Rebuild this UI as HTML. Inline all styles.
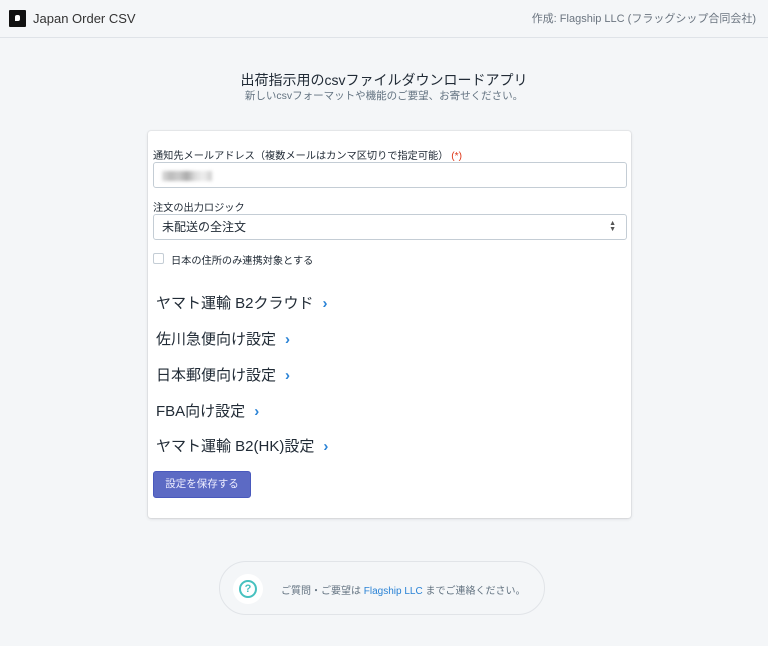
<!DOCTYPE html>
<html><head><meta charset="utf-8"><style>
*{box-sizing:border-box;margin:0;padding:0}
body{width:768px;height:646px;background:#f4f6f8;font-family:"Liberation Sans","Noto Sans CJK JP",sans-serif;color:#212b36;position:relative;overflow:hidden}
.top{position:absolute;left:0;top:0;width:768px;height:38px;border-bottom:1px solid #dfe3e8;background:#f4f6f8}
.logo{position:absolute;left:9px;top:10px;width:17px;height:17px;background:#111;border-radius:1px}
.logo:after{content:"";position:absolute;left:6px;top:5px;width:5px;height:6px;background:#fff;border-radius:2px 2px 2px 0}
.brand{position:absolute;left:33px;top:11px;font-size:13px;color:#333}
.by{position:absolute;right:12px;top:10px;font-size:11px;color:#6b7580}
h1{position:absolute;left:0;width:768px;top:70px;text-align:center;font-size:14px;font-weight:normal;color:#212b36}
.sub{position:absolute;left:0;width:768px;top:88px;text-align:center;font-size:10.5px;color:#637381}
.card{position:absolute;left:148px;top:131px;width:483px;height:387px;background:#fff;border-radius:3px;box-shadow:0 0 0 1px rgba(63,63,68,.06),0 1px 3px rgba(63,63,68,.15)}
.lbl{position:absolute;left:5px;font-size:10.2px;color:#212b36}
.inp{position:absolute;left:5px;width:474px;height:26px;border:1px solid #c4cdd5;border-radius:3px;background:#fff}
.blur{position:absolute;left:8px;top:8px;width:50px;height:10px;background:linear-gradient(90deg,#ddd,#bbb,#ccc,#aaa,#ddd,#eee,#ccc);filter:blur(1.5px)}
.sel{font-size:12px;padding:3px 0 0 8px}
.arr{position:absolute;right:10px;top:6px;font-size:7px;line-height:6px;color:#555}
.cb{position:absolute;left:5px;top:122px;width:11px;height:11px;border:1px solid #c4cdd5;border-radius:2px}
.sec{position:absolute;left:8px;font-size:15px;color:#212b36}
.sec b{color:#2a83d6;font-weight:bold;font-size:15px;margin-left:9px}
.btn{position:absolute;left:5px;top:340px;width:98px;height:27px;background:#5c6ac4;border:1px solid #4959bd;border-radius:3px;color:#eef;font-size:10.5px;text-align:center;line-height:25px}
.foot{position:absolute;left:219px;top:561px;width:326px;height:54px;border:1px solid #e1e4e8;border-radius:27px;background:#f4f6f8}
.q{position:absolute;left:13px;top:12px;width:30px;height:30px;border-radius:50%;background:#fff}
.q:after{content:"?";position:absolute;left:6px;top:6px;width:14px;height:14px;border:2px solid #47c1bf;border-radius:50%;color:#47c1bf;font-size:11px;font-weight:bold;text-align:center;line-height:14px}
.ft{position:absolute;left:61px;top:20px;font-size:10px;color:#637381}
.ft a{color:#2a83d6;text-decoration:none}
</style></head><body>
<div class="top"><div class="logo"></div><div class="brand">Japan Order CSV</div><div class="by">作成: Flagship LLC (フラッグシップ合同会社)</div></div>
<h1>出荷指示用のcsvファイルダウンロードアプリ</h1>
<div class="sub">新しいcsvフォーマットや機能のご要望、お寄せください。</div>
<div class="card">
<div class="lbl" style="top:16px">通知先メールアドレス（複数メールはカンマ区切りで指定可能） <span style="color:#de3618">(*)</span></div>
<div class="inp" style="top:31px"><div class="blur"></div></div>
<div class="lbl" style="top:68px">注文の出力ロジック</div>
<div class="inp sel" style="top:83px">未配送の全注文<div class="arr">▲<br>▼</div></div>
<div class="cb"></div><div class="lbl" style="top:121px;left:23px">日本の住所のみ連携対象とする</div>
<div class="sec" style="top:161px">ヤマト運輸 B2クラウド<b>›</b></div>
<div class="sec" style="top:197px">佐川急便向け設定<b>›</b></div>
<div class="sec" style="top:233px">日本郵便向け設定<b>›</b></div>
<div class="sec" style="top:269px">FBA向け設定<b>›</b></div>
<div class="sec" style="top:304px">ヤマト運輸 B2(HK)設定<b>›</b></div>
<div class="btn">設定を保存する</div>
</div>
<div class="foot"><div class="q"></div><div class="ft">ご質問・ご要望は <a>Flagship LLC</a> までご連絡ください。</div></div>
</body></html>
